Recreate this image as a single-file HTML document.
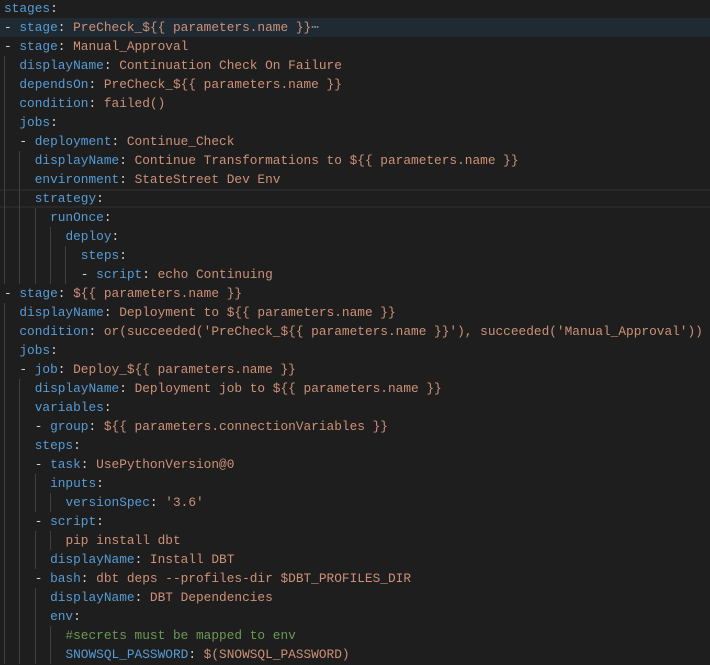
<!DOCTYPE html>
<html><head><meta charset="utf-8"><style>
html,body{margin:0;padding:0;background:#1e1e1e;width:710px;height:665px;overflow:hidden}
#c{position:absolute;top:-1px;left:0;width:710px;font-family:"Liberation Mono",monospace;font-size:12.8px;color:#d4d4d4}
.l{height:19px;line-height:19px;white-space:pre;padding-left:4px;box-sizing:border-box;position:relative}
i{display:inline-block;width:15.36px;height:19px;vertical-align:top;box-shadow:inset 1px 0 0 #404040}
.k{color:#569cd6}.s{color:#ce9178}.c{color:#6a9955}
.hl{background:#1f2a33}
.cur{box-shadow:inset 0 2px 0 #282828,inset 0 -2px 0 #282828}
.f{color:#8b8b8b}
</style></head><body><div id="c">
<div class="l"><span class="k">stages</span>:</div>
<div class="l hl">- <span class="k">stage</span>: <span class="s">PreCheck_${{ parameters.name }}</span><span class="f">⋯</span></div>
<div class="l">- <span class="k">stage</span>: <span class="s">Manual_Approval</span></div>
<div class="l"><i></i><span class="k">displayName</span>: <span class="s">Continuation Check On Failure</span></div>
<div class="l"><i></i><span class="k">dependsOn</span>: <span class="s">PreCheck_${{ parameters.name }}</span></div>
<div class="l"><i></i><span class="k">condition</span>: <span class="s">failed()</span></div>
<div class="l"><i></i><span class="k">jobs</span>:</div>
<div class="l"><i></i>- <span class="k">deployment</span>: <span class="s">Continue_Check</span></div>
<div class="l"><i></i><i></i><span class="k">displayName</span>: <span class="s">Continue Transformations to ${{ parameters.name }}</span></div>
<div class="l"><i></i><i></i><span class="k">environment</span>: <span class="s">StateStreet Dev Env</span></div>
<div class="l cur"><i></i><i></i><span class="k">strategy</span>:</div>
<div class="l"><i></i><i></i><i></i><span class="k">runOnce</span>:</div>
<div class="l"><i></i><i></i><i></i><i></i><span class="k">deploy</span>:</div>
<div class="l"><i></i><i></i><i></i><i></i><i></i><span class="k">steps</span>:</div>
<div class="l"><i></i><i></i><i></i><i></i><i></i>- <span class="k">script</span>: <span class="s">echo Continuing</span></div>
<div class="l">- <span class="k">stage</span>: <span class="s">${{ parameters.name }}</span></div>
<div class="l"><i></i><span class="k">displayName</span>: <span class="s">Deployment to ${{ parameters.name }}</span></div>
<div class="l"><i></i><span class="k">condition</span>: <span class="s">or(succeeded('PreCheck_${{ parameters.name }}'), succeeded('Manual_Approval'))</span></div>
<div class="l"><i></i><span class="k">jobs</span>:</div>
<div class="l"><i></i>- <span class="k">job</span>: <span class="s">Deploy_${{ parameters.name }}</span></div>
<div class="l"><i></i><i></i><span class="k">displayName</span>: <span class="s">Deployment job to ${{ parameters.name }}</span></div>
<div class="l"><i></i><i></i><span class="k">variables</span>:</div>
<div class="l"><i></i><i></i>- <span class="k">group</span>: <span class="s">${{ parameters.connectionVariables }}</span></div>
<div class="l"><i></i><i></i><span class="k">steps</span>:</div>
<div class="l"><i></i><i></i>- <span class="k">task</span>: <span class="s">UsePythonVersion@0</span></div>
<div class="l"><i></i><i></i><i></i><span class="k">inputs</span>:</div>
<div class="l"><i></i><i></i><i></i><i></i><span class="k">versionSpec</span>: <span class="s">'3.6'</span></div>
<div class="l"><i></i><i></i>- <span class="k">script</span>:</div>
<div class="l"><i></i><i></i><i></i><i></i><span class="s">pip install dbt</span></div>
<div class="l"><i></i><i></i><i></i><span class="k">displayName</span>: <span class="s">Install DBT</span></div>
<div class="l"><i></i><i></i>- <span class="k">bash</span>: <span class="s">dbt deps --profiles-dir $DBT_PROFILES_DIR</span></div>
<div class="l"><i></i><i></i><i></i><span class="k">displayName</span>: <span class="s">DBT Dependencies</span></div>
<div class="l"><i></i><i></i><i></i><span class="k">env</span>:</div>
<div class="l"><i></i><i></i><i></i><i></i><span class="c">#secrets must be mapped to env</span></div>
<div class="l"><i></i><i></i><i></i><i></i><span class="k">SNOWSQL_PASSWORD</span>: <span class="s">$(SNOWSQL_PASSWORD)</span></div>
</div></body></html>
